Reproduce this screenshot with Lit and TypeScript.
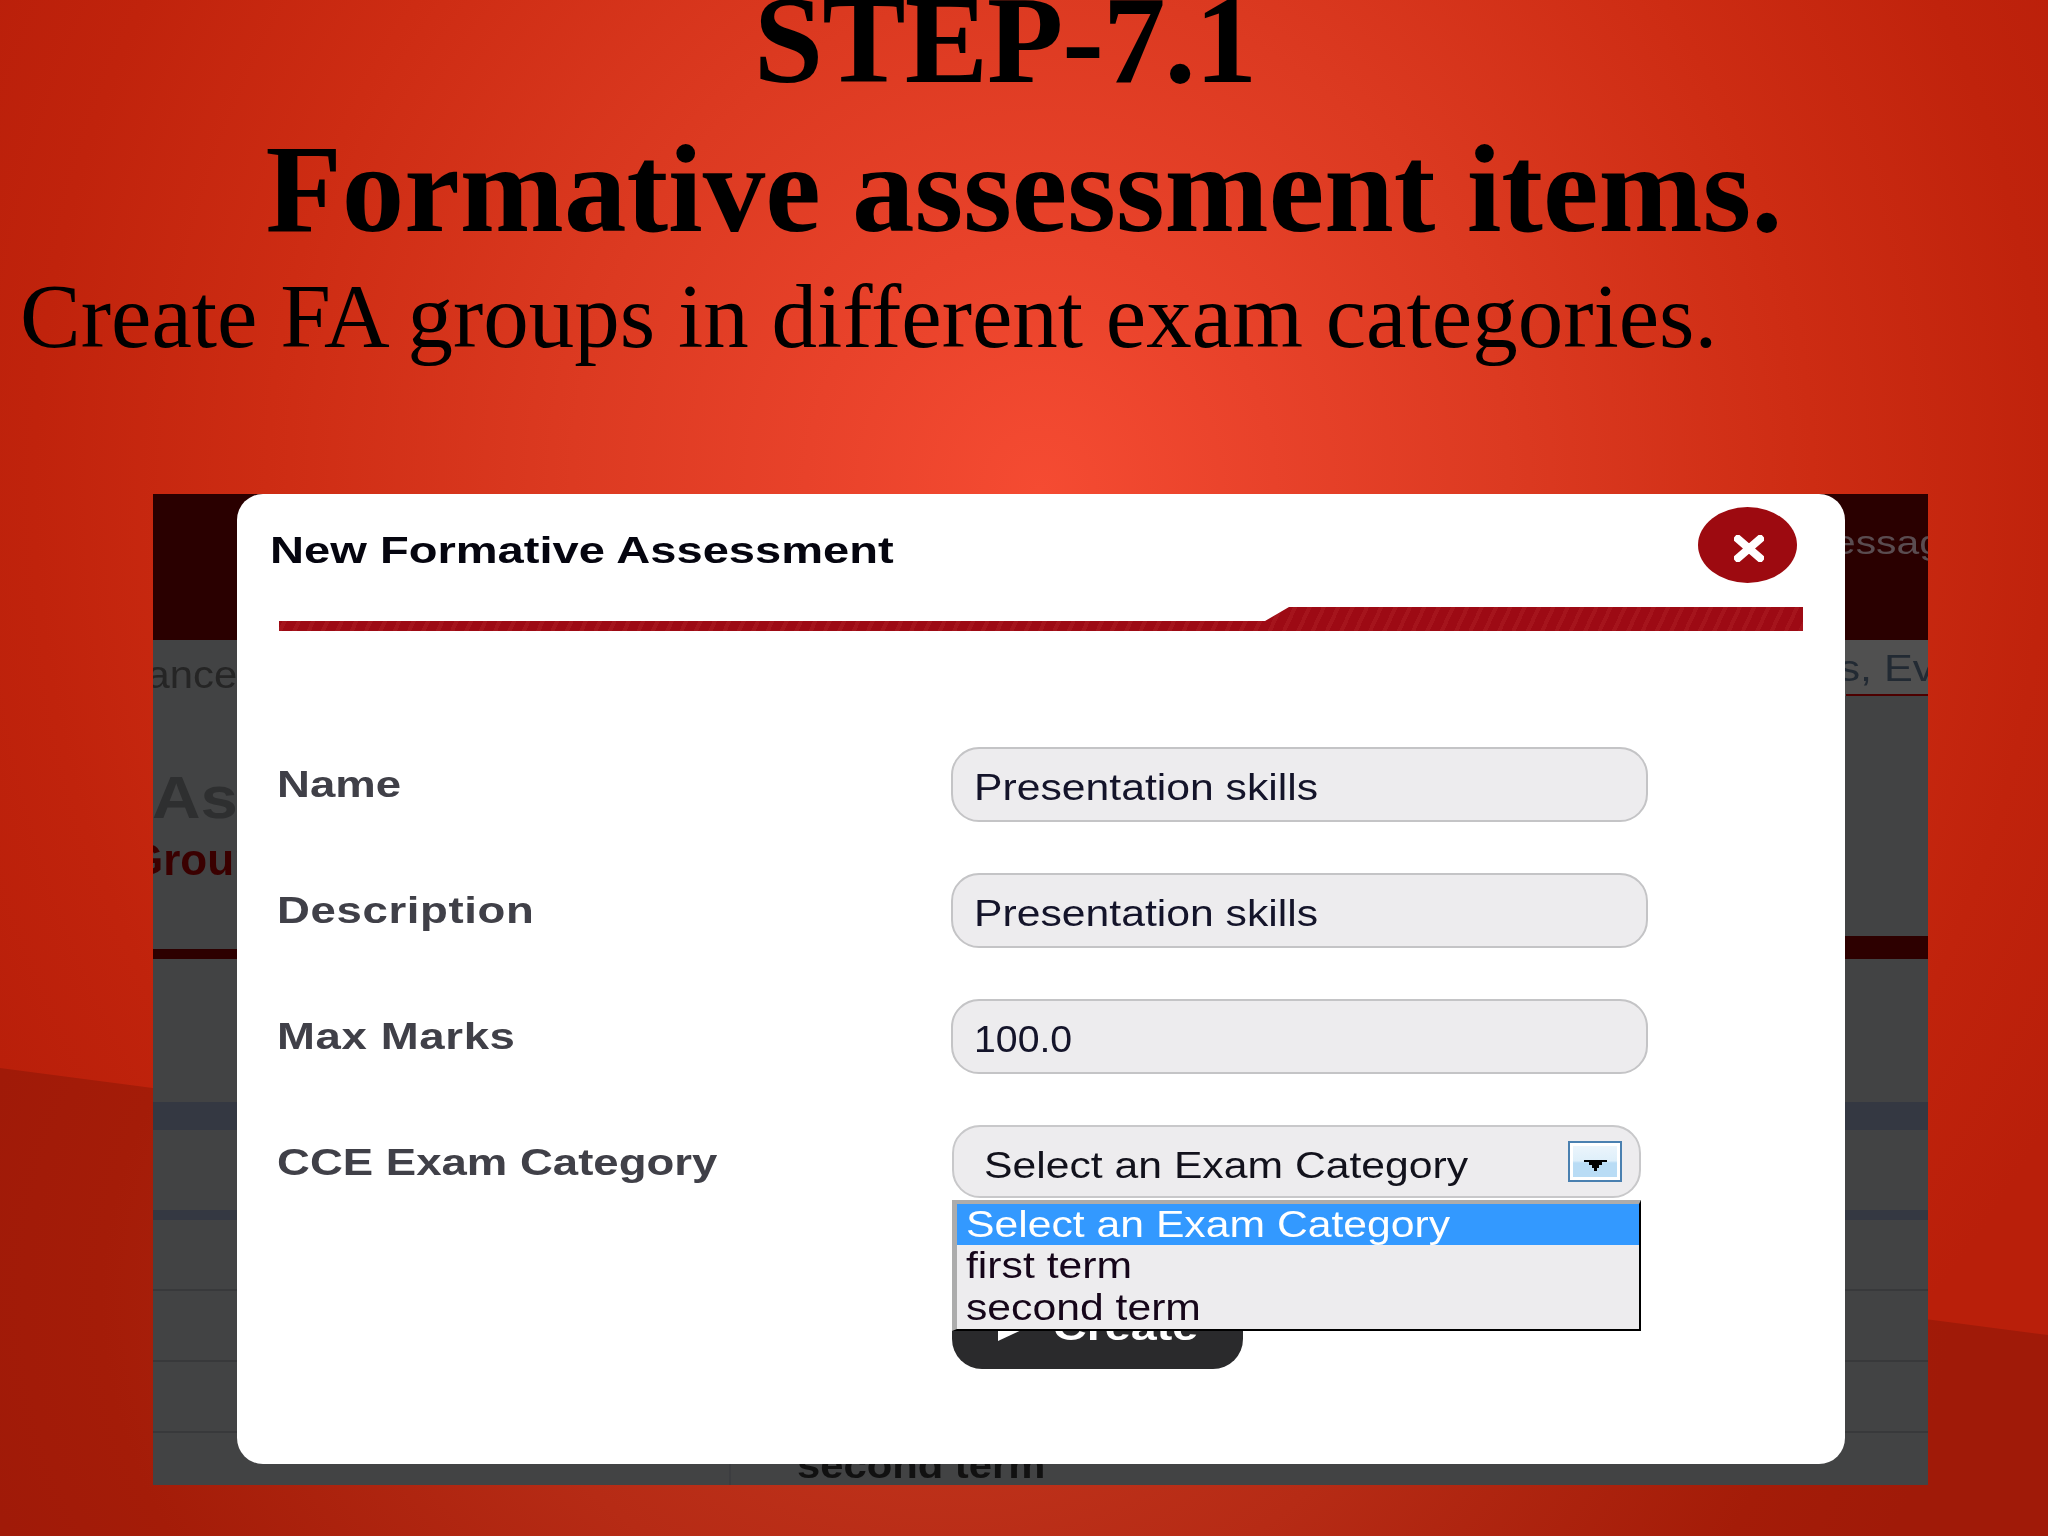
import { LitElement, html, css } from "lit";
import { customElement } from "lit/decorators.js";

@customElement("app-root")
export class AppRoot extends LitElement {
  static styles = css`
    :host {
      display: block;
      position: relative;
      isolation: isolate;
      width: 2048px;
      height: 1536px;
      overflow: hidden;
      background: radial-gradient(ellipse 1170px 1250px at 1040px 490px, #f54b32 0%, #e8422a 20%, #dc3a21 40%, #cd2c13 66%, #c0230c 86%, #b91f0a 100%);
      font-family: "Liberation Sans", Arial, sans-serif;
      color: #000;
    }
    :host::before {
      content: "";
      position: absolute;
      inset: 0;
      z-index: -1;
      clip-path: polygon(0 1068px, 2048px 1335px, 2048px 1536px, 0 1536px);
      background: radial-gradient(ellipse 1000px 700px at 950px 1300px, #c6371f 0%, #b62b15 45%, #a41c08 85%, #a01a08 100%);
    }
    .slide-title {
      margin: -34px 0 0;
      font: bold 125px/149px "Liberation Serif", "Times New Roman", serif;
      text-align: center;
    }
    .slide-title span { display: block; }
    .slide-title .step { padding-right: 38px; letter-spacing: -1px; }
    .slide-sub {
      margin: 3px 0 0;
      padding-left: 20px;
      font: 91px/100px "Liberation Serif", "Times New Roman", serif;
      white-space: nowrap;
    }
    .shot {
      position: relative;
      margin: 127px 0 0 153px;
      width: 1775px;
      height: 991px;
      overflow: hidden;
      background: #424344;
      filter: blur(0.55px);
    }
    .sx {
      display: inline-block;
      transform-origin: left center;
      white-space: nowrap;
    }
    .topbar {
      height: 146px;
      background: #2a0000;
      color: #5a4c50;
      font-size: 34px;
      line-height: 40px;
      padding: 28px 0 0 1646px;
      box-sizing: border-box;
      white-space: nowrap;
    }
    .topbar .sx { transform: scaleX(1.2); }
    .nav {
      display: flex;
      height: 56px;
      white-space: nowrap;
      overflow: hidden;
    }
    .nav-left {
      flex: none;
      width: 84px;
      overflow: hidden;
      direction: rtl;
      font-size: 38px;
      line-height: 44px;
      padding-top: 13px;
      box-sizing: border-box;
      color: #252525;
    }
    .nav-left .sx { transform: scaleX(1.1); transform-origin: right center; }
    .nav-right {
      flex: 1;
      min-width: 0;
      position: relative;
      background: linear-gradient(to right, transparent 1608px, #505050 1608px);
      border-bottom: 2px solid;
      border-image: linear-gradient(to right, transparent 1608px, #4d0000 1608px) 1;
      font-size: 36px;
      line-height: 42px;
      color: #222a33;
      padding: 8px 0 0 1515px;
      box-sizing: border-box;
    }
    .nav-right .sx { transform: scaleX(1.2); }
    .head {
      height: 240px;
      box-sizing: border-box;
      padding-top: 67px;
      white-space: nowrap;
      overflow: hidden;
    }
    .head h2 {
      margin: 0 0 0 -1px;
      font: bold 60px/70px "Liberation Sans", Arial, sans-serif;
      color: #2e2f30;
    }
    .head h2 .sx { transform: scaleX(1.12); }
    .head h3 {
      margin: 2px 0 0 -24px;
      font: bold 44px/50px "Liberation Sans", Arial, sans-serif;
      color: #3a0000;
    }
    .stripe {
      height: 23px;
      background:
        linear-gradient(#2d0000, #2d0000) bottom / 100% 10px no-repeat,
        linear-gradient(#2d0000, #2d0000) right / calc(100% - 84px) 100% no-repeat;
    }
    .band-a { height: 143px; }
    .navy-a { height: 28px; background: #343842; }
    .band-b { height: 80px; }
    .navy-b { height: 10px; background: #343842; }
    .tr { height: 71px; box-sizing: border-box; border-bottom: 2px solid #38393b; }
    .tr.last { height: 54px; border-bottom: 0; display: flex; }
    .cell { width: 576px; border-right: 2px solid #3c3d40; }
    .cell + .cell {
      flex: 1;
      border: 0;
      padding: 13px 0 0 66px;
      font: bold 36px/40px "Liberation Sans", Arial, sans-serif;
      color: #111;
    }
    .cell .sx { transform: scaleX(1.16); }

    .modal {
      position: absolute;
      left: 84px;
      top: 0;
      width: 1608px;
      height: 970px;
      border-radius: 26px;
      background: #fff;
    }
    .modal-head {
      display: flex;
      justify-content: space-between;
      align-items: flex-start;
      height: 113px;
      padding: 0 48px 0 33px;
    }
    .modal-title {
      margin-top: 37px;
      font-size: 36px;
      line-height: 40px;
      font-weight: bold;
      color: #05050f;
    }
    .modal-title .sx { transform: scaleX(1.308); }
    .close {
      display: flex;
      align-items: center;
      justify-content: center;
      margin-top: 13px;
      width: 99px;
      height: 76px;
      padding: 6px 0 0 2px;
      box-sizing: border-box;
      border-radius: 50%;
      background: #9d0a10;
    }
    .rule {
      margin-left: 42px;
      width: 1524px;
      height: 24px;
      clip-path: polygon(0 14px, 986px 14px, 1010px 0, 100% 0, 100% 100%, 0 100%);
      background: repeating-linear-gradient(115deg, #9d0a14 0 9px, #a5141c 9px 13px);
    }
    .form {
      display: grid;
      grid-template-columns: 674px 697px;
      grid-auto-rows: 75px;
      row-gap: 51px;
      margin-top: 116px;
      padding-left: 40px;
    }
    .label {
      align-self: center;
      font-size: 36px;
      line-height: 40px;
      font-weight: bold;
      color: #404048;
    }
    .label .sx { transform: scaleX(1.265); }
    .label.loose .sx { letter-spacing: 0.5px; }
    .field {
      display: flex;
      align-items: center;
      height: 75px;
      box-sizing: border-box;
      padding: 6px 0 0 21px;
      border: 2px solid #c4c4c6;
      border-radius: 28px;
      background: #edecee;
      font-size: 36px;
      line-height: 40px;
      color: #14142a;
    }
    .field .sx,
    .select .sx,
    .opt .sx { transform: scaleX(1.186); }
    .field.num .sx { transform: scaleX(1.09); }
    .select-wrap { position: relative; margin-left: 1px; width: 689px; }
    .select {
      display: flex;
      align-items: center;
      justify-content: space-between;
      height: 73px;
      box-sizing: border-box;
      padding: 0 17px 0 30px;
      border: 2px solid #c8c8ca;
      border-radius: 28px;
      background: #edecee;
      font-size: 36px;
      line-height: 40px;
      color: #12121c;
    }
    .select-text { padding-top: 9px; }
    .toggle {
      display: flex;
      justify-content: center;
      width: 54px;
      height: 41px;
      box-sizing: border-box;
      padding-top: 17px;
      border: 2px solid #4a80b0;
      box-shadow: inset 0 0 0 3px #fff;
      background: linear-gradient(#eef6fc 0%, #deeffa 48%, #b9dcf5 54%, #b9dcf5 100%);
    }
    .menu {
      position: absolute;
      left: 0;
      top: 100%;
      width: 689px;
      height: 131px;
      box-sizing: border-box;
      border-style: solid;
      border-width: 4px 2px 2px 5px;
      border-color: #acacac #000 #000 #acacac;
      background: #edecee;
      font-size: 36px;
      line-height: 40px;
      color: #16061a;
      z-index: 2;
    }
    .opt { height: 41px; box-sizing: border-box; padding: 1px 0 0 9px; }
    .opt + .opt { height: 42px; }
    .opt.on { background: #3399ff; color: #fff; }
    .create {
      display: flex;
      align-items: center;
      gap: 27px;
      grid-column: 2;
      width: 291px;
      height: 70px;
      margin: 48px 0 0 1px;
      box-sizing: border-box;
      padding: 0 0 12px 46px;
      border-radius: 0 0 30px 30px;
      background: #2a2a2c;
      color: #fff;
      font-size: 36px;
      line-height: 40px;
      font-weight: bold;
    }
    .create .sx { transform: scaleX(1.295); }
    svg { display: block; flex: none; }
  `;

  private field(label: string, value: string, loose = false, num = false) {
    return html`
      <div class="label ${loose ? "loose" : ""}"><span class="sx">${label}</span></div>
      <div class="field ${num ? "num" : ""}"><span class="sx">${value}</span></div>
    `;
  }

  render() {
    return html`
      <h1 class="slide-title">
        <span class="step">STEP-7.1</span>
        <span>Formative assessment items.</span>
      </h1>
      <p class="slide-sub">Create FA groups in different exam categories.</p>

      <section class="shot">
        <div class="topbar"><span class="sx">Messages</span></div>
        <div class="nav">
          <div class="nav-left"><span class="sx">Attendance</span></div>
          <div class="nav-right"><span class="sx">News, Events</span></div>
        </div>
        <div class="head">
          <h2><span class="sx">Assessment</span></h2>
          <h3>Groups</h3>
        </div>
        <div class="stripe"></div>
        <div class="band-a"></div>
        <div class="navy-a"></div>
        <div class="band-b"></div>
        <div class="navy-b"></div>
        <div class="tr"></div>
        <div class="tr"></div>
        <div class="tr"></div>
        <div class="tr last">
          <div class="cell"></div>
          <div class="cell"><span class="sx">second term</span></div>
        </div>

        <div class="modal">
          <div class="modal-head">
            <div class="modal-title"><span class="sx">New Formative Assessment</span></div>
            <div class="close">
              <svg width="30" height="27" viewBox="0 0 30 27">
                <path d="M4 4 L26 23 M26 4 L4 23" stroke="#fff" stroke-width="8" fill="none" stroke-linecap="square"></path>
              </svg>
            </div>
          </div>
          <div class="rule"></div>
          <div class="form">
            ${this.field("Name", "Presentation skills")}
            ${this.field("Description", "Presentation skills", true)}
            ${this.field("Max Marks", "100.0", true, true)}
            <div class="label"><span class="sx">CCE Exam Category</span></div>
            <div class="select-wrap">
              <div class="select">
                <span class="select-text"><span class="sx">Select an Exam Category</span></span>
                <span class="toggle">
                  <svg width="23" height="11" viewBox="0 0 23 11">
                    <polygon points="0,0 23,0 23,2 18,2 18,5 15,5 15,8 13,8 13,11 10,11 10,8 8,8 8,5 5,5 5,2 0,2" fill="#000"></polygon>
                  </svg>
                </span>
              </div>
              <div class="menu">
                <div class="opt on"><span class="sx">Select an Exam Category</span></div>
                <div class="opt"><span class="sx">first term</span></div>
                <div class="opt"><span class="sx">second term</span></div>
              </div>
            </div>
            <div class="create">
              <svg width="28" height="26" viewBox="0 0 28 26"><polygon points="0,0 28,13 0,26" fill="#fff"></polygon></svg>
              <span class="sx">Create</span>
            </div>
          </div>
        </div>
      </section>
    `;
  }
}
